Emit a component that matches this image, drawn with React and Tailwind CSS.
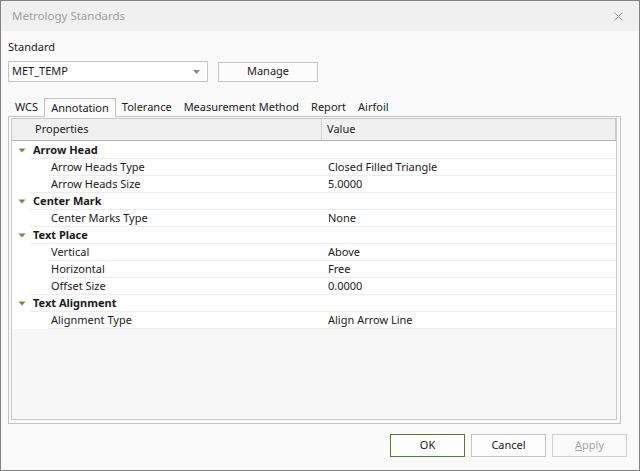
import React from "react";

const groups = [
  {
    name: "Arrow Head",
    items: [
      ["Arrow Heads Type", "Closed Filled Triangle"],
      ["Arrow Heads Size", "5.0000"],
    ],
  },
  { name: "Center Mark", items: [["Center Marks Type", "None"]] },
  {
    name: "Text Place",
    items: [
      ["Vertical", "Above"],
      ["Horizontal", "Free"],
      ["Offset Size", "0.0000"],
    ],
  },
  { name: "Text Alignment", items: [["Alignment Type", "Align Arrow Line"]] },
];

const tabs = ["WCS", "Annotation", "Tolerance", "Measurement Method", "Report", "Airfoil"];

function Triangle() {
  return (
    <svg width="8" height="5" viewBox="0 0 8 5" className="block">
      <path d="M0.5 0.5 L7.5 0.5 L4 4.5 Z" fill="#6b8f2c" />
    </svg>
  );
}

export default function App() {
  return (
    <div
      className="w-[640px] h-[471px] border border-[#808080] bg-[#fafafa] flex flex-col text-[11px] text-[#1a1a1a]"
      style={{ fontFamily: '"Noto Sans", "Open Sans", sans-serif' }}
    >
      {/* Title bar */}
      <div className="h-[30px] bg-[#f0f0f0] flex items-center justify-between pl-[11px] pr-[16px] text-[#a0a0a0]">
        <span className="text-[11.5px]">Metrology Standards</span>
        <svg width="9" height="9" viewBox="0 0 9 9">
          <path d="M0.5 0.5 L8.5 8.5 M8.5 0.5 L0.5 8.5" stroke="#9a9a9a" strokeWidth="1" />
        </svg>
      </div>

      <div className="flex-1 flex flex-col pl-[7px] pt-[8px]">
        <div className="h-[16px] leading-[16px]">Standard</div>
        <div className="mt-[6px] flex items-center h-[21px]">
          <div className="w-[200px] h-[21px] bg-white border border-[#c4c4c4] flex items-center justify-between pl-[3px] pr-[7px]">
            <span>MET_TEMP</span>
            <svg width="7" height="4" viewBox="0 0 7 4">
              <path d="M0 0 L7 0 L3.5 4 Z" fill="#8a8a8a" />
            </svg>
          </div>
          <div className="ml-[10px] w-[100px] h-[20px] border border-[#c4c4c4] bg-[#fcfcfc] flex items-center justify-center">
            Manage
          </div>
        </div>

        {/* Tabs */}
        <div className="mt-[17px] h-[17px] flex items-end pl-[1px] relative z-10">
          {tabs.map((t) =>
            t === "Annotation" ? (
              <div
                key={t}
                className="h-[19px] -mb-px px-[6px] border border-b-0 border-[#c4c4c4] bg-[#fafafa] flex items-center pt-[1px]"
              >
                {t}
              </div>
            ) : (
              <div key={t} className="h-[18px] px-[6px] flex items-center">
                {t}
              </div>
            )
          )}
        </div>

        {/* Tab panel */}
        <div className="w-[613px] h-[308px] border border-[#c4c4c4] pl-[2px] pt-[1px] pr-[3px] pb-[3px]">
          <div className="h-full border border-[#c8c8c8] bg-[#f7f7f7] flex flex-col">
            <div className="h-[22px] bg-[#f0f0f0] border-b border-[#b4b4b4] flex">
              <div className="w-[310px] pl-[23px] flex items-center border-r border-[#d4d4d4]">Properties</div>
              <div className="flex-1 pl-[5px] flex items-center border-r border-[#c8c8c8]">Value</div>
            </div>
            <div className="pt-px bg-white">
              {groups.map((g, gi) => (
                <div key={g.name}>
                  <div className="flex h-[17px]">
                    <div className="w-[18px] flex items-center justify-center pl-[2px]">
                      <Triangle />
                    </div>
                    <div
                      className={
                        "flex-1 flex items-center pl-[3px] font-bold border-b border-[#ececec] " +
                        (gi > 0 ? "border-t -mt-px" : "")
                      }
                    >
                      {g.name}
                    </div>
                  </div>
                  {g.items.map(([k, v]) => (
                    <div key={k} className="flex h-[17px]">
                      <div className="w-[36px]" />
                      <div className="flex-1 flex border-b border-[#ececec]">
                        <div className="w-[274px] pl-[3px] flex items-center">{k}</div>
                        <div className="flex-1 pl-[6px] flex items-center">{v}</div>
                      </div>
                    </div>
                  ))}
                </div>
              ))}
            </div>
          </div>
        </div>

        {/* Buttons */}
        <div className="mt-[10px] flex justify-end pr-[12px] gap-[6px]">
          <div className="w-[75px] h-[23px] border border-[#5b7a26] bg-[#fdfdfd] flex items-center justify-center">
            OK
          </div>
          <div className="w-[75px] h-[23px] border border-[#c4c4c4] bg-[#fdfdfd] flex items-center justify-center">
            Cancel
          </div>
          <div className="w-[75px] h-[23px] border border-[#d0d0d0] bg-[#fafafa] flex items-center justify-center text-[#a6a6a6]">
            <span><span className="underline">A</span>pply</span>
          </div>
        </div>
      </div>
    </div>
  );
}
